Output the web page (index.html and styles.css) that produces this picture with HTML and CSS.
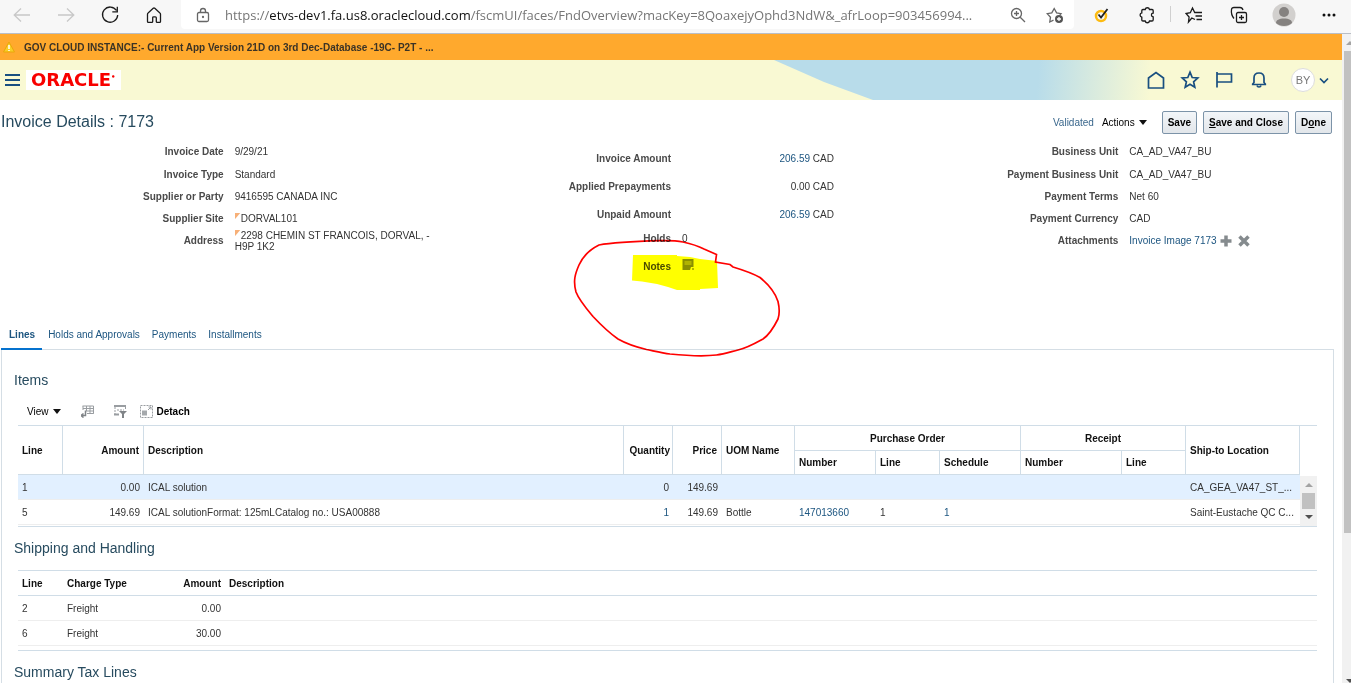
FILE: index.html
```html
<!DOCTYPE html>
<html lang="en">
<head>
    <meta charset="UTF-8">
    <meta name="viewport" content="width=device-width, initial-scale=1.0">
    <title>Invoice Details : 7173</title>
    <link rel="stylesheet" href="styles.css">
</head>
<body>
    <!-- Browser toolbar -->
    <div class="browser">
        <button class="nav-btn" aria-label="Back"><svg class="muted" width="18" height="16" viewBox="0 0 18 16"><path d="M17 8H1M8 1.5L1.200 8L8 14.500"/></svg></button>
        <button class="nav-btn" aria-label="Forward"><svg class="muted" width="18" height="16" viewBox="0 0 18 16"><path d="M1 8h16M10 1.500L16.800 8L10 14.500"/></svg></button>
        <button class="nav-btn" aria-label="Refresh"><svg width="18" height="18" viewBox="0 0 18 18"><path d="M15.500 4.500A7.600 7.600 0 1 0 16.700 9M16.300 0.800v5h-5"/></svg></button>
        <button class="nav-btn" aria-label="Home"><svg width="18" height="18" viewBox="0 0 18 18"><path d="M2.500 8.200c0-.6.2-1 .6-1.300L8.200 2.300c.5-.4 1.100-.4 1.600 0l5.100 4.600c.4.3.6.700.6 1.300v7.300c0 .6-.3.900-.9.900h-2.400c-.6 0-.9-.3-.9-.9v-3.800c0-.6-.3-.9-.9-.9H8.600c-.6 0-.9.3-.9.900v3.800c0 .6-.3.900-.9.900H3.400c-.6 0-.9-.3-.9-.9z"/></svg></button>
        <div class="address">
            <svg class="grey" width="14" height="16" viewBox="0 0 14 16"><rect x="1.500" y="5.500" width="11" height="9" rx="1.500"/><path d="M4.500 5.500V4a2.500 2.500 0 0 1 5 0v1.500"/><circle cx="7" cy="10" r=".5"/></svg>
            <div class="url" role="textbox" aria-label="Address">https://<span class="host">etvs-dev1.fa.us8.oraclecloud.com</span>/fscmUI/faces/FndOverview?macKey=8QoaxejyOphd3NdW&amp;_afrLoop=903456994...</div>
            <button class="field-btn" aria-label="Zoom"><svg class="grey" width="16" height="16" viewBox="0 0 16 16"><circle cx="6.500" cy="6.500" r="5"/><path d="M10.200 10.200L15 15M6.500 4v5M4 6.500h5"/></svg></button>
            <button class="field-btn" aria-label="Add to favorites"><svg class="grey" width="18" height="18" viewBox="0 0 18 18"><path d="M7.500 14.200L3.800 16l.7-4.800L1.200 7.700l4.600-.8L8.200 2.500l2.400 4.400 4.400.8-1.200 1.300"/><circle class="plus-bg" cx="13" cy="13" r="4"/><path class="plus" d="M13 11v4M11 13h4"/></svg></button>
        </div>
        <button class="ext-btn norton" aria-label="Norton"><svg width="16" height="16" viewBox="0 0 16 16"><circle cx="7" cy="9" r="5"/><path d="M4.500 7.500L7 10.500L13.500 2"/></svg></button>
        <button class="ext-btn" aria-label="Extensions"><svg width="18" height="18" viewBox="0 0 18 18"><path d="M5 3.500h2.200a2.200 2.200 0 0 1 4.300 0H14c.8 0 1.200.4 1.200 1.200v2.500a1.800 1.800 0 0 0 0 3.600v3c0 .8-.4 1.200-1.200 1.200h-2.500a2.200 2.200 0 0 1-4.300 0H5c-.8 0-1.200-.4-1.200-1.200v-2.600a2.200 2.200 0 0 1 0-4.300V4.700c0-.8.4-1.200 1.200-1.200z"/></svg></button>
        <span class="divider"></span>
        <button class="ext-btn" aria-label="Favorites"><svg width="18" height="18" viewBox="0 0 18 18"><path d="M10 13.500L6.800 12 3.500 16l.6-5L1 7.500l4.300-.8L7.500 2l2.200 4.500H17M10.500 10H17M11.500 13.500H17"/></svg></button>
        <button class="ext-btn" aria-label="Collections"><svg width="18" height="18" viewBox="0 0 18 18"><rect x="6.500" y="6.500" width="10" height="10" rx="1.500"/><path d="M11.500 9v5M9 11.500h5M4 12.500C1.500 9.500 1 7 1.500 3.500 1.700 2 2.500 1.500 4 1.500h6c1.500 0 2.500.7 3 2.500"/></svg></button>
        <button class="ext-btn" aria-label="Profile"><svg width="24" height="24" viewBox="0 0 24 24"><g stroke="none"><circle cx="12" cy="12" r="11.500" fill="#d2d0ce"/><circle cx="12" cy="9" r="5" fill="#858280"/><path d="M4 20c0-3 3-4.500 8-4.500s8 1.500 8 4.500c-4 4-12 4-16 0z" fill="#858280"/></g></svg></button>
        <button class="ext-btn" aria-label="Settings and more"><svg width="16" height="4" viewBox="0 0 16 4"><g stroke="none" fill="#111"><circle cx="3" cy="2" r="1.500"/><circle cx="8" cy="2" r="1.500"/><circle cx="13" cy="2" r="1.500"/></g></svg></button>
    </div>

    <div class="viewport">
        <div class="page">
            <div class="banner">
                <svg width="12" height="12" viewBox="0 0 12 12"><path d="M6 1L11.500 11H.5z" fill="#f7cf27" stroke="#e9a60c"/><path d="M6 4v4M6 9v1" stroke="#fff" stroke-width="1.500"/></svg>
                <span>GOV CLOUD INSTANCE:- Current App Version 21D on 3rd Dec-Database -19C- P2T - ...</span>
            </div>

            <header class="header">
                <button class="icon-btn" aria-label="Navigator"><svg width="15" height="12" viewBox="0 0 15 12"><path d="M0 1h15M0 6h15M0 11h15"/></svg></button>
                <a class="logo" href="#">ORACLE<sup>&#8226;</sup></a>
                <nav class="global">
                    <a href="#" aria-label="Home"><svg width="20" height="20" viewBox="0 0 20 20"><path d="M2.500 8L10 2.500l7.500 5.500v10h-15z"/></svg></a>
                    <a href="#" aria-label="Favorites"><svg width="20" height="20" viewBox="0 0 20 20"><path d="M10 2.200l2.200 5.300 5.600.5-4.200 3.800 1.200 5.500-4.800-3-4.800 3 1.200-5.500L2.200 8l5.600-.5z"/></svg></a>
                    <a href="#" aria-label="Watchlist"><svg width="20" height="20" viewBox="0 0 20 20"><path d="M3 2v15.500M3 4h14.500v8H3"/></svg></a>
                    <a href="#" aria-label="Notifications"><svg width="20" height="20" viewBox="0 0 20 20"><path d="M6 12.500V8C6 5 7.500 3 11 3s5 2 5 5v4.500l1.300 1.500v.5H4.700V14z"/><path d="M9 15.500c.5 2 3.500 2 4 0"/></svg></a>
                </nav>
                <button class="user"><span class="initials">BY</span><svg width="10" height="8" viewBox="0 0 10 8"><path d="M1 2.500L5 6.500l4-4"/></svg></button>
            </header>

            <div class="title-row">
                <h1>Invoice Details : 7173</h1>
                <a class="status" href="#">Validated</a>
                <button class="menu">Actions <span class="caret"></span></button>
                <button class="btn">Save</button>
                <button class="btn"><u>S</u>ave and Close</button>
                <button class="btn">D<u>o</u>ne</button>
            </div>

            <div class="details">
                <dl class="fields">
                    <dt>Invoice Date</dt><dd>9/29/21</dd>
                    <dt>Invoice Type</dt><dd>Standard</dd>
                    <dt>Supplier or Party</dt><dd>9416595 CANADA INC</dd>
                    <dt>Supplier Site</dt><dd class="flagged"><i></i>DORVAL101</dd>
                    <dt>Address</dt><dd class="flagged"><i></i>2298 CHEMIN ST FRANCOIS, DORVAL, -<br>H9P 1K2</dd>
                </dl>
                <dl class="fields amounts">
                    <dt>Invoice Amount</dt><dd class="num"><a href="#">206.59</a> CAD</dd>
                    <dt>Applied Prepayments</dt><dd class="num">0.00 CAD</dd>
                    <dt>Unpaid Amount</dt><dd class="num"><a href="#">206.59</a> CAD</dd>
                    <dt>Holds</dt><dd>0</dd>
                    <dt>Notes</dt><dd><button class="icon-btn" aria-label="Notes"><svg width="13" height="12" viewBox="0 0 13 12"><path d="M.5 0h11v8H9l-1 3H.5z" fill="#8a8f92"/><path d="M2.500 3h7M2.500 5h7" stroke="#d8d8d8"/><path d="M10 9h2v2h-2z" fill="#b5b5b5"/></svg></button></dd>
                    <!-- Marker and pen strokes round the Notes field -->
                    <svg class="ink" width="215" height="122" viewBox="569 237 215 122">
                        <path class="marker" d="M633 255H677V256L690 257L700 259L717 261L718 288L700 289V290H677L668 287L657 284L642 281.500L632 280.500z"/>
                        <path class="pen" d="M599 245C610 243 633 241.500 660 240.700C672 240.500 678 241 683 242C692 244 698 246 704 249L716.500 254.500L715.500 262L730 264.500L733 267C743 270 752 273 760 277.500C769 285 775 292 778 301.500C780 310 779 316 778 319C773 329 769 335 763 339C754 344 747 348 738 350C730 352 724 354 716.500 355C708 356 690 356 670 354C662 353 654 351 646.500 349.500C636 347 625 343 618 339C608 332 601 325 593 316.500C585 307 579 300 576 292C573 281 575 274 579 265C583 256 589 250 599 245z"/>
                    </svg>
                </dl>
                <dl class="fields">
                    <dt>Business Unit</dt><dd>CA_AD_VA47_BU</dd>
                    <dt>Payment Business Unit</dt><dd>CA_AD_VA47_BU</dd>
                    <dt>Payment Terms</dt><dd>Net 60</dd>
                    <dt>Payment Currency</dt><dd>CAD</dd>
                    <dt>Attachments</dt>
                    <dd class="attach">
                        <a href="#">Invoice Image 7173</a>
                        <button class="icon-btn" aria-label="Add"><svg width="12" height="12" viewBox="0 0 12 12"><path d="M6 .5v11M.5 6h11"/></svg></button>
                        <button class="icon-btn" aria-label="Remove"><svg width="12" height="12" viewBox="0 0 12 12"><path d="M1.500 1.500l9 9M10.500 1.500l-9 9"/></svg></button>
                    </dd>
                </dl>
            </div>

            <nav class="tabs">
                <a class="active" href="#">Lines</a>
                <a href="#">Holds and Approvals</a>
                <a href="#">Payments</a>
                <a href="#">Installments</a>
            </nav>

            <main class="panel">
                <h2>Items</h2>
                <div class="toolbar">
                    <button class="menu">View <span class="caret"></span></button>
                    <button class="icon-btn" aria-label="Export to Excel"><svg width="13" height="13" viewBox="0 0 13 13"><path d="M1.500 1h11v7.500H6M2 1v4M2 3.500h10.500M5.500 1v5M9 1v7.500M5 6h7.500M12.500 1v7.500" stroke="#999da1"/><path d="M4.500 5.500v5H0M2.500 8.500L0 10.500l2.500 2" stroke="#808488" stroke-width="1.500"/></svg></button>
                    <button class="icon-btn" aria-label="Query by example"><svg width="13" height="13" viewBox="0 0 13 13"><path d="M0 1h12M0 9.500h5" stroke="#999da1" stroke-width="2"/><path d="M1 2v7M3 5h7M11.500 2v2" stroke="#999da1" stroke-dasharray="2 1"/><path d="M5 6h8l-3 3v4H8V9z" fill="#808488"/></svg></button>
                    <button class="detach"><svg width="13" height="13" viewBox="0 0 13 13"><path d="M.5 .5h12v12H.5z" stroke="#999da1" stroke-dasharray="2 1"/><path d="M2 5.500h5v5H2z" fill="#a5a9ac"/><path d="M8 5l3-3M8.500 2H11v2.500" stroke="#999da1"/></svg>Detach</button>
                </div>
                <div class="grid">
                    <table class="items">
                        <colgroup>
                            <col class="c-line"><col class="c-amount"><col><col class="c-qty"><col class="c-qty"><col class="c-uom">
                            <col class="c-amount"><col class="c-short"><col class="c-amount"><col class="c-receipt"><col class="c-short"><col class="c-ship">
                        </colgroup>
                        <thead>
                            <tr>
                                <th rowspan="2">Line</th>
                                <th rowspan="2" class="num">Amount</th>
                                <th rowspan="2">Description</th>
                                <th rowspan="2" class="num tight">Quantity</th>
                                <th rowspan="2" class="num">Price</th>
                                <th rowspan="2">UOM Name</th>
                                <th colspan="3" class="group">Purchase Order</th>
                                <th colspan="2" class="group">Receipt</th>
                                <th rowspan="2">Ship-to Location</th>
                            </tr>
                            <tr><th>Number</th><th>Line</th><th>Schedule</th><th>Number</th><th>Line</th></tr>
                        </thead>
                        <tbody>
                            <tr class="selected"><td>1</td><td class="num">0.00</td><td>ICAL solution</td><td class="num">0</td><td class="num">149.69</td><td></td><td></td><td></td><td></td><td></td><td></td><td>CA_GEA_VA47_ST_...</td></tr>
                            <tr><td>5</td><td class="num">149.69</td><td>ICAL solutionFormat: 125mLCatalog no.: USA00888</td><td class="num"><a href="#">1</a></td><td class="num">149.69</td><td>Bottle</td><td><a href="#">147013660</a></td><td>1</td><td><a href="#">1</a></td><td></td><td></td><td>Saint-Eustache QC C...</td></tr>
                        </tbody>
                    </table>
                    <div class="grid-scroll"><span class="up"></span><span class="thumb"></span><span class="down"></span></div>
                </div>

                <h2>Shipping and Handling</h2>
                <div class="grid shipping-grid">
                    <table class="shipping">
                        <colgroup><col class="c-line"><col class="c-amount"><col class="c-amount"><col></colgroup>
                        <thead>
                            <tr><th>Line</th><th>Charge Type</th><th class="num">Amount</th><th>Description</th></tr>
                        </thead>
                        <tbody>
                            <tr><td>2</td><td>Freight</td><td class="num">0.00</td><td></td></tr>
                            <tr><td>6</td><td>Freight</td><td class="num">30.00</td><td></td></tr>
                        </tbody>
                    </table>
                </div>

                <h2>Summary Tax Lines</h2>
            </main>
        </div>
        <div class="page-scroll"><span class="up"></span><span class="thumb"></span><span class="down"></span></div>
    </div>
</body>
</html>
```
FILE: styles.css
```css
* {
    box-sizing: border-box;
}

body {
    margin: 0;
    height: 100vh;
    display: flex;
    flex-direction: column;
    overflow: hidden;
    background-color: #fff;
    color: #333;
    font-family: "Liberation Sans", Arial, sans-serif;
    font-size: 10px;
    line-height: 11px;
}

button {
    padding: 0;
    border: none;
    background: none;
    color: #000;
    font: inherit;
    cursor: pointer;
}

a {
    color: #1c5580;
    text-decoration: none;
}

svg {
    display: block;
    flex: none;
    fill: none;
}

/* Browser toolbar */
.browser {
    display: flex;
    flex: none;
    height: 34px;
    padding-bottom: 4px;
    background-color: #f7f7f7;
    border-bottom: 1px solid #b9bec6;
}

.browser svg {
    stroke: #1b1b1b;
    stroke-width: 1.3;
}

.browser svg.muted {
    stroke: #c8c8c8;
}

.browser svg.grey {
    stroke: #666;
}

.nav-btn,
.ext-btn {
    display: flex;
    flex: none;
    align-items: center;
    justify-content: center;
    width: 44px;
}

.ext-btn {
    width: 45px;
}

.norton circle {
    stroke: #fdbb11;
    stroke-width: 2.5;
}

.norton path {
    stroke: #222;
    stroke-width: 1.8;
}

.address {
    display: flex;
    flex: 1;
    align-items: center;
    min-width: 0;
    margin: 0 5px;
    padding: 0 10px 0 15px;
    background-color: #fff;
    border-radius: 0 0 4px 4px;
}

.url {
    flex: 1;
    min-width: 0;
    margin-left: 15px;
    overflow: hidden;
    white-space: nowrap;
    color: #767676;
    font-family: "Open Sans", "Segoe UI", sans-serif;
    font-size: 13px;
    line-height: 20px;
}

.host {
    color: #111;
}

.field-btn {
    margin-left: 20px;
}

.browser .plus-bg {
    fill: #555;
    stroke: none;
}

.browser .plus {
    stroke: #fff;
}

.divider {
    width: 1px;
    height: 16px;
    margin: 6px 0 0 1px;
    background-color: #d0d0d0;
}

.viewport {
    display: flex;
    flex: 1;
    min-height: 0;
}

.page {
    display: flex;
    flex: 1;
    flex-direction: column;
    min-width: 0;
    overflow: hidden;
}

/* Instance banner and header */
.banner {
    display: flex;
    flex: none;
    align-items: center;
    gap: 9px;
    height: 26px;
    padding-left: 3px;
    background-color: #ffa92d;
    color: #3b3326;
    font-weight: bold;
}

.header {
    position: relative;
    display: flex;
    flex: none;
    align-items: center;
    height: 40px;
    padding: 0 13px 0 5px;
    background-color: #f9f9d3;
}

.header::before {
    content: "";
    position: absolute;
    top: 0;
    bottom: 0;
    left: 774px;
    right: 192px;
    background: linear-gradient(95deg, #b8dcea 70%, #f9f9d3);
    clip-path: polygon(0 0, 100% 0, 100% 100%, 99px 100%, 50px 22px);
}

.header > * {
    position: relative;
}

.header svg {
    stroke: #194f80;
    stroke-width: 2;
}

.logo {
    margin-left: 6px;
    padding: 0 5px;
    background-color: #fff;
    color: #f80000;
    font-family: "DejaVu Sans", sans-serif;
    font-size: 18px;
    font-weight: bold;
    line-height: 20px;
}

.logo sup {
    font-size: 7px;
    line-height: 1px;
}

.global {
    display: flex;
    gap: 14px;
    margin-left: auto;
}

.header .global svg,
.header .user svg {
    stroke-width: 1.7;
}

.user {
    display: flex;
    align-items: center;
    gap: 4px;
    margin-left: 23px;
}

.initials {
    width: 24px;
    height: 24px;
    border: 1px solid #ddd;
    border-radius: 50%;
    background-color: #fff;
    color: #777;
    font-size: 11px;
    line-height: 22px;
}

/* Title row */
.title-row {
    display: flex;
    flex: none;
    align-items: center;
    height: 44px;
    padding: 0 10px 0 1px;
}

h1 {
    flex: 1;
    margin: 0;
    color: #274b5f;
    font-size: 16px;
    font-weight: normal;
    line-height: 20px;
}

.status {
    color: #3a678c;
}

.menu {
    display: flex;
    align-items: center;
    gap: 4px;
}

.title-row .menu {
    margin: 0 9px 0 8px;
}

.caret {
    border: 4px solid transparent;
    border-top: 5px solid #111;
    border-bottom: 0;
}

.btn {
    height: 23px;
    margin-left: 6px;
    padding: 0 5px;
    border: 1px solid #7c93a8;
    border-radius: 2px;
    background: linear-gradient(#f3f6f9, #e2e6ea);
    font-weight: bold;
}

/* Invoice fields */
.details {
    display: grid;
    flex: none;
    grid-template-columns: repeat(3, 1fr);
    min-height: 178px;
}

.fields {
    position: relative;
    display: grid;
    grid-template-columns: 50% 1fr;
    grid-template-rows: 23px 22px 22px 22px 23px;
    column-gap: 11px;
    align-content: start;
    align-items: center;
    margin: -4px 0 0;
}

.amounts {
    grid-template-rows: 28px 28px 28px 20px 36px;
    margin-top: 0;
}

.fields dt {
    color: #4a4a4a;
    font-weight: bold;
    text-align: right;
}

.fields dd {
    margin: 0;
    white-space: nowrap;
}

.fields dd.num {
    width: 152px;
}

.flagged i {
    display: inline-block;
    width: 6px;
    height: 7px;
    vertical-align: top;
    background-color: #f7b078;
    clip-path: polygon(0 0, 100% 0, 0 100%);
}

.attach {
    display: flex;
    align-items: center;
    gap: 3px;
}

.attach button:last-child {
    margin-left: 3px;
}

.attach svg {
    stroke: #858b8e;
    stroke-width: 3.5;
}

.ink {
    position: absolute;
    top: 93px;
    left: 122px;
    pointer-events: none;
    mix-blend-mode: multiply;
}

.marker {
    fill: #ff0;
}

.pen {
    stroke: #f00;
    stroke-width: 1.7;
}

/* Tabs */
.tabs {
    display: flex;
    flex: none;
    height: 28px;
    margin: 0 0 -1px 1px;
    z-index: 1;
}

.tabs a {
    padding: 0 6px;
    line-height: 26px;
}

.tabs .active {
    padding: 0 7px 0 8px;
    border-bottom: 2px solid #0572ce;
    font-weight: bold;
}

.panel {
    flex: 1 0 auto;
    margin: 0 8px 0 1px;
    padding: 20px 16px 0;
    border: 1px solid #d5dee5;
    border-bottom: none;
}

h2 {
    margin: 11px 0 12px -4px;
    color: #274b5f;
    font-size: 14px;
    font-weight: normal;
    line-height: 20px;
}

.panel h2:first-child {
    margin: 0 0 7px -4px;
}

.toolbar {
    display: flex;
    align-items: center;
    gap: 20px;
    height: 28px;
    padding-left: 9px;
}

.detach {
    display: flex;
    align-items: center;
    gap: 4px;
    margin-left: -7px;
    font-weight: bold;
}

/* Data tables */
.grid {
    display: flex;
    align-items: flex-end;
    padding-bottom: 1px;
    border: 1px solid #d0dde7;
    border-width: 1px 0;
}

.shipping-grid {
    padding-bottom: 4px;
}

table {
    flex: 1;
    width: 100%;
    min-width: 0;
    table-layout: fixed;
    border-spacing: 0;
}

th,
td {
    height: 25px;
    padding: 0 4px;
    text-align: left;
    white-space: nowrap;
}

th {
    color: #111;
    border-bottom: 1px solid #d0dde7;
}

td {
    border-bottom: 1px solid #eee;
}

.items th {
    border-right: 1px solid #d0dde7;
}

.items thead tr + tr th {
    height: 24px;
}

.num,
th.num,
td.num {
    text-align: right;
}

th.tight {
    padding: 0 2px;
}

th.group {
    text-align: center;
}

.selected td {
    background-color: #e2f0ff;
}

.c-line { width: 45px; }
.c-amount { width: 81px; }
.c-qty { width: 49px; }
.c-uom { width: 73px; }
.c-short { width: 64px; }
.c-receipt { width: 101px; }
.c-ship { width: 114px; }

/* Scroll bars */
.grid-scroll,
.page-scroll {
    display: flex;
    flex: none;
    flex-direction: column;
    align-items: center;
    background-color: #f1f1f1;
}

.grid-scroll {
    justify-content: space-between;
    width: 17px;
    height: 50px;
    margin-bottom: -1px;
    padding: 7px 0;
}

.grid-scroll .thumb {
    width: 13px;
    height: 16px;
    background-color: #c1c1c1;
}

.up,
.down {
    border: 4px solid transparent;
}

.up {
    border-top: 0;
    border-bottom-color: #a3a3a3;
}

.down {
    border-bottom: 0;
    border-top-color: #505050;
}

.page-scroll {
    width: 9px;
    padding: 7px 0 0 4px;
    align-items: flex-start;
    overflow: hidden;
}

.page-scroll .thumb {
    width: 13px;
    height: 75%;
    margin: 6px 0 auto -2px;
    background-color: #c1c1c1;
}
```
